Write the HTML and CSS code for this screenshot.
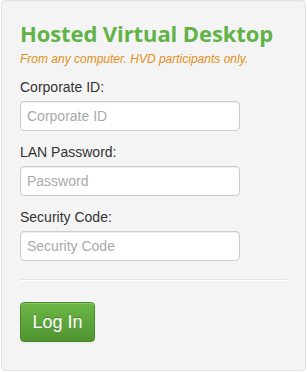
FILE: index.html
```html
<!DOCTYPE html>
<html>
<head>
<meta charset="utf-8">
<link rel="stylesheet" href="styles.css">
</head>
<body>
<div class="panel">
  <h1 class="title">Hosted Virtual Desktop</h1>
  <p class="subtitle">From any computer. HVD participants only.</p>
  <form class="form">
    <div class="group">
      <label class="label">Corporate ID:</label>
      <input class="input" type="text" placeholder="Corporate ID">
    </div>
    <div class="group">
      <label class="label">LAN Password:</label>
      <input class="input" type="password" placeholder="Password">
    </div>
    <div class="group">
      <label class="label">Security Code:</label>
      <input class="input" type="text" placeholder="Security Code">
    </div>
    <hr class="rule">
    <button class="btn" type="button">Log In</button>
  </form>
</div>
</body>
</html>
```
FILE: styles.css
```css
html, body {
  margin: 0;
  padding: 0;
  background: #ffffff;
}
body {
  font-family: "Liberation Sans", Arial, sans-serif;
  font-size: 14px;
  line-height: 20px;
  color: #333333;
}
.panel {
  box-sizing: border-box;
  width: 305px;
  height: 371px;
  margin: 0 0 0 1px;
  padding: 15px 18px 19px 18px;
  background: #f4f4f4;
  border: 1px solid #e3e3e3;
  border-radius: 4px;
  box-shadow: inset 0 1px 1px rgba(0,0,0,0.03);
}
.title {
  margin: 0;
  font-family: "Open Sans", sans-serif;
  font-weight: 700;
  font-size: 22px;
  line-height: 34px;
  color: #62b347;
  letter-spacing: -0.1px;
}
.subtitle {
  margin: 0 0 9px 0;
  font-style: italic;
  font-size: 12px;
  line-height: 18px;
  color: #e38f16;
}
.form {
  margin: 0;
}
.group {
  display: flex;
  flex-direction: column;
  align-items: flex-start;
  margin-bottom: 11px;
}
.label {
  display: block;
  margin-bottom: 4px;
  font-size: 14px;
  line-height: 20px;
  color: #333333;
}
.input {
  box-sizing: border-box;
  width: 220px;
  height: 30px;
  padding: 4px 6px;
  margin: 0;
  font-family: "Liberation Sans", Arial, sans-serif;
  font-size: 14px;
  line-height: 20px;
  color: #555555;
  background: #ffffff;
  border: 1px solid #cccccc;
  border-radius: 4px;
  box-shadow: inset 0 1px 1px rgba(0,0,0,0.075);
}
.input::placeholder {
  color: #aaaaaa;
}
.rule {
  margin: 18px 0 21px 0;
  border: 0;
  border-top: 1px solid #e4e4e4;
  border-bottom: 1px solid #ffffff;
}
.btn {
  box-sizing: border-box;
  width: 75px;
  height: 40px;
  padding: 0;
  font-family: "Liberation Sans", Arial, sans-serif;
  font-size: 18px;
  line-height: 24px;
  color: #ffffff;
  text-shadow: 0 -1px 0 rgba(0,0,0,0.25);
  background: linear-gradient(to bottom, #6cb646, #4e9431);
  border: 1px solid #4a8b30;
  border-radius: 4px;
  box-shadow: inset 0 1px 0 rgba(255,255,255,0.2), 0 1px 2px rgba(0,0,0,0.05);
}
```
